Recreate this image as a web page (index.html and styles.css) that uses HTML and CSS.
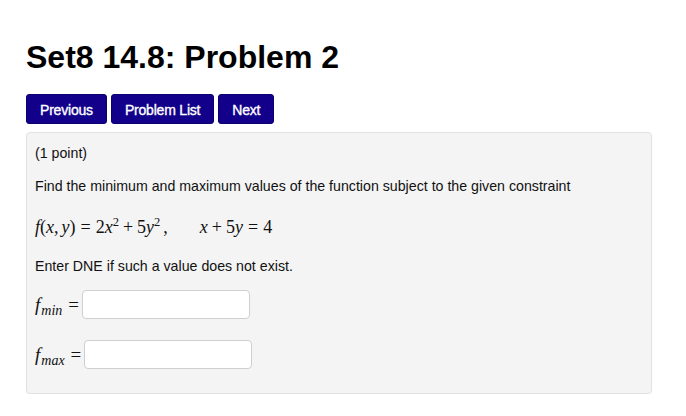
FILE: index.html
```html
<!DOCTYPE html>
<html>
<head>
<meta charset="utf-8">
<link rel="stylesheet" href="styles.css">
</head>
<body>
<div class="page">
  <h1 class="title">Set8 14.8: Problem 2</h1>
  <div class="nav">
    <a class="btn">Previous</a>
    <a class="btn">Problem List</a>
    <a class="btn">Next</a>
  </div>
  <div class="panel">
    <p class="txt pts">(1 point)</p>
    <p class="txt find">Find the minimum and maximum values of the function subject to the given constraint</p>
    <p class="math"><i>f</i>(<i>x</i>,<span class="thin"></span><i>y</i>)<span class="rel">=</span>2<i>x</i><sup>2</sup><span class="bin">+</span>5<i>y</i><sup>2</sup><span class="thin"></span>,<span class="sp"></span><i>x</i><span class="bin">+</span>5<i>y</i><span class="rel">=</span>4</p>
    <p class="txt dne">Enter DNE if such a value does not exist.</p>
    <div class="row r1">
      <span class="lbl"><i>f</i><sub>min</sub><span class="eq">=</span></span>
      <span class="inp"></span>
    </div>
    <div class="row r2">
      <span class="lbl"><i>f</i><sub>max</sub><span class="eq">=</span></span>
      <span class="inp"></span>
    </div>
  </div>
</div>
</body>
</html>
```
FILE: styles.css
```css
html, body { margin: 0; padding: 0; background: #fff; }
.page { padding: 39px 34px 0 26px; font-family: "Liberation Sans", Arial, sans-serif; color: #111; }
.title { margin: 0; font-size: 32px; line-height: 36px; font-weight: bold; color: #000; }
.nav { margin-top: 19px; display: flex; gap: 4px; }
.btn { display: block; height: 30px; line-height: 30px; padding: 0 13px; box-sizing: border-box; background: #12008b; border: 1px solid #0a0070; border-radius: 3px; color: #fff; font-size: 14px; -webkit-text-stroke: 0.35px #fff; letter-spacing: -0.2px; }
.panel { margin-top: 8px; background: #f4f4f4; border: 1px solid #e2e2e2; border-radius: 4px; padding: 12px 8px 24px 8px; box-shadow: 0 1px 1px rgba(0,0,0,0.04); }
.txt { margin: 0; font-size: 14.2px; line-height: 16px; color: #111; }
.find { margin-top: 17px; }
.math { margin: 23px 0 0; font-family: "Liberation Serif", "Times New Roman", serif; font-size: 18px; line-height: 20px; color: #111; white-space: nowrap; }
.math sup { font-size: 12.5px; vertical-align: 0; position: relative; top: -7px; line-height: 0; }
.thin { display: inline-block; width: 3px; }
.rel { margin: 0 5px; }
.bin { margin: 0 4px; }
.sp { display: inline-block; width: 32px; }
.dne { margin-top: 21px; }
.row { display: flex; align-items: center; }
.r1 { margin-top: 16px; }
.r2 { margin-top: 21px; }
.lbl { font-family: "Liberation Serif", "Times New Roman", serif; font-size: 19px; color: #111; display: inline-flex; align-items: baseline; }
.lbl sub { font-style: italic; font-size: 14px; vertical-align: 0; position: relative; top: 4px; margin-left: 1px; }
.eq { margin-left: 6px; }
.inp { display: block; width: 168px; height: 29px; box-sizing: border-box; background: #fff; border: 1px solid #cfcfcf; border-radius: 4px; margin-left: 3px; }
```
